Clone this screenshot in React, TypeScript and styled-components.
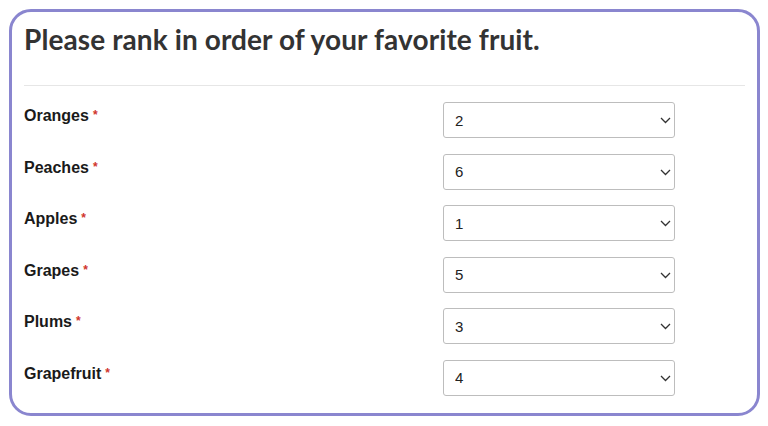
import React from 'react'
import styled, { createGlobalStyle } from 'styled-components'

const GlobalStyle = createGlobalStyle`
    body {
        margin: 0;
        background: #ffffff;
        font-family: "Liberation Sans", Arial, sans-serif;
    }
`

const Card = styled.div`
    margin: 9px 8px 0 9px;
    height: 407px;
    box-sizing: border-box;
    border: 3px solid #8a86cf;
    border-radius: 22px;
    padding: 0 12px;
`

const Title = styled.h1`
    margin: 0;
    padding: 10px 0 0;
    height: 73px;
    box-sizing: border-box;
    font-family: Lato, "Liberation Sans", sans-serif;
    font-weight: 700;
    font-size: 28px;
    line-height: 34px;
    color: #333333;
    letter-spacing: 0.1px;
`

const Divider = styled.hr`
    margin: 0 0 16px;
    border: none;
    border-top: 1px solid #e6e6e6;
`

const Rows = styled.div`
    display: flex;
    flex-direction: column;
    gap: 15.6px;
`

const Row = styled.div`
    display: grid;
    grid-template-columns: 419px 232px;
    align-items: start;
`

const Label = styled.label`
    padding-top: 3px;
    font-size: 16px;
    line-height: 20px;
    font-weight: 700;
    color: #1a1a1a;
`

const Required = styled.span`
    color: #d0342c;
    font-size: 12px;
    margin-left: 4px;
    vertical-align: 2px;
`

const SelectWrap = styled.div`
    position: relative;
    height: 36px;
`

const Select = styled.select`
    appearance: none;
    width: 100%;
    height: 36px;
    box-sizing: border-box;
    border: 1px solid #bdbdbd;
    border-radius: 3px;
    background: #ffffff;
    padding: 0 30px 0 11px;
    font-family: "Liberation Sans", Arial, sans-serif;
    font-size: 15px;
    color: #222222;
`

const Chevron = styled.svg`
    position: absolute;
    right: 4px;
    top: 15px;
    pointer-events: none;
`

const fruits: [string, number][] = [
    ['Oranges', 2],
    ['Peaches', 6],
    ['Apples', 1],
    ['Grapes', 5],
    ['Plums', 3],
    ['Grapefruit', 4],
]

export default function App() {
    return (
        <>
            <GlobalStyle />
            <Card>
                <Title>Please rank in order of your favorite fruit.</Title>
                <Divider />
                <Rows>
                    {fruits.map(([name, rank]) => (
                        <Row key={name}>
                            <Label>
                                {name}
                                <Required>*</Required>
                            </Label>
                            <SelectWrap>
                                <Select defaultValue={rank}>
                                    {[1, 2, 3, 4, 5, 6].map((n) => (
                                        <option key={n} value={n}>{n}</option>
                                    ))}
                                </Select>
                                <Chevron width="11" height="7" viewBox="0 0 11 7">
                                    <path d="M1 1l4.5 4.5L10 1" fill="none" stroke="#333" strokeWidth="1.3" />
                                </Chevron>
                            </SelectWrap>
                        </Row>
                    ))}
                </Rows>
            </Card>
        </>
    )
}
